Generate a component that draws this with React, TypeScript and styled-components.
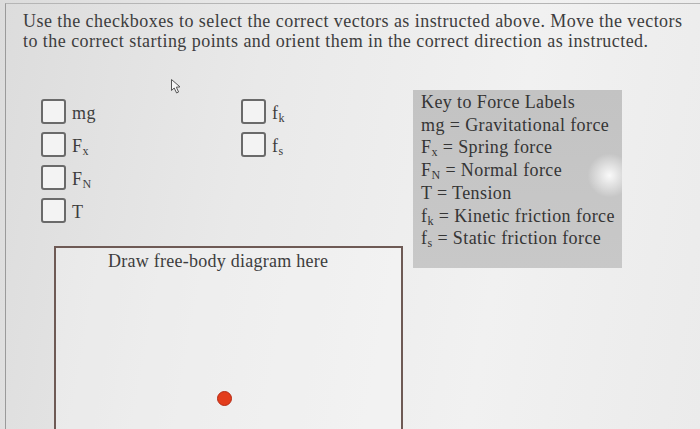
import React from 'react';
import styled, { createGlobalStyle } from 'styled-components';

const GlobalStyle = createGlobalStyle`
  html, body {
    margin: 0;
    padding: 0;
    width: 700px;
    height: 429px;
    overflow: hidden;
  }
  body {
    background: linear-gradient(100deg, #dcdcdc 0%, #e9e9e9 35%, #f1f1f1 70%, #ebebeb 100%);
    font-family: 'Liberation Serif', 'DejaVu Serif', serif;
    color: #3d3d3d;
  }
`;

function Cursor() {
  return (
    <CursorMark>
      <svg width="14" height="17" viewBox="0 0 14 17">
        <path
          d="M1.5 1.5 L1.5 12.5 L4.2 10 L6.6 15 L8.6 14 L6.3 9.2 L10 8.9 Z"
          fill="#f6f6f6"
          stroke="#555"
          strokeWidth="1"
          strokeLinejoin="round"
        />
      </svg>
    </CursorMark>
  );
}

function Option({ children }: { children: React.ReactNode }) {
  return (
    <OptionRow>
      <Box />
      <OptionLabel>{children}</OptionLabel>
    </OptionRow>
  );
}

const KEY_LINES: React.ReactNode[] = [
  'Key to Force Labels',
  <>mg = Gravitational force</>,
  <>F<sub>x</sub> = Spring force</>,
  <>F<sub>N</sub> = Normal force</>,
  <>T = Tension</>,
  <>f<sub>k</sub> = Kinetic friction force</>,
  <>f<sub>s</sub> = Static friction force</>,
];

export default function App() {
  return (
    <>
      <GlobalStyle />
      <Frame>
        <Instructions>
          Use the checkboxes to select the correct vectors as instructed above. Move the vectors
          to the correct starting points and orient them in the correct direction as instructed.
        </Instructions>
        <Workspace>
          <LeftPane>
            <Options>
              <OptionColumn>
                <Option>mg</Option>
                <Option>F<sub>x</sub></Option>
                <Option>F<sub>N</sub></Option>
                <Option>T</Option>
              </OptionColumn>
              <OptionColumn>
                <Option>f<sub>k</sub></Option>
                <Option>f<sub>s</sub></Option>
              </OptionColumn>
              <Cursor />
            </Options>
            <DrawArea>
              <DrawTitle>Draw free-body diagram here</DrawTitle>
              <StartPoint />
            </DrawArea>
          </LeftPane>
          <KeyBox>
            {KEY_LINES.map((line, i) => (
              <KeyLine key={i}>{line}</KeyLine>
            ))}
          </KeyBox>
        </Workspace>
      </Frame>
    </>
  );
}

const Frame = styled.div`
  margin: 3px 0 0 5px;
  height: 440px;
  border-left: 1px solid #9a9a9a;
  border-top: 1px solid #b5b5b5;
  box-sizing: border-box;
`;

const Instructions = styled.p`
  margin: 0;
  padding: 7px 0 0 17px;
  width: 676px;
  font-size: 18px;
  letter-spacing: 0.45px;
  line-height: 20px;
`;

const Workspace = styled.div`
  display: flex;
  margin-top: 39px;
`;

const LeftPane = styled.div`
  width: 406px;
  display: flex;
  flex-direction: column;
`;

const Options = styled.div`
  position: relative;
  display: grid;
  grid-template-columns: 200px auto;
  padding: 9px 0 0 35px;
  height: 156px;
  box-sizing: border-box;
`;

const OptionColumn = styled.div`
  display: flex;
  flex-direction: column;
  gap: 8px;
`;

const OptionRow = styled.div`
  display: flex;
  align-items: center;
  gap: 6px;
  height: 25px;
`;

const Box = styled.span`
  width: 25px;
  height: 25px;
  box-sizing: border-box;
  border: 2px solid #6a6a6a;
  border-radius: 3px;
  background: #f3f3f3;
`;

const OptionLabel = styled.span`
  font-size: 18px;
  line-height: 1;
  margin-top: 2px;
  letter-spacing: 0.4px;

  sub {
    font-size: 12px;
    vertical-align: -3px;
    line-height: 0;
  }
`;

const CursorMark = styled.span`
  position: absolute;
  left: 164px;
  top: -12px;
  line-height: 0;
`;

const DrawArea = styled.div`
  position: relative;
  margin-left: 48px;
  width: 349px;
  height: 200px;
  border: 2px solid #6e5a55;
  box-sizing: border-box;
  background: rgba(250, 250, 250, 0.35);
`;

const DrawTitle = styled.div`
  padding: 3px 0 0 52px;
  font-size: 18px;
  letter-spacing: 0.25px;
  line-height: 20px;
`;

const StartPoint = styled.span`
  position: absolute;
  left: 161px;
  top: 143px;
  width: 13px;
  height: 13px;
  border-radius: 50%;
  background: #e33d1c;
  border: 1px solid #b52a14;
`;

const KeyBox = styled.div`
  margin-left: 1px;
  width: 209px;
  height: 178px;
  box-sizing: border-box;
  padding: 1px 0 0 8px;
  background:
    radial-gradient(circle at 94% 48%, rgba(255, 255, 255, 0.9) 0, rgba(255, 255, 255, 0) 22px),
    linear-gradient(180deg, #c3c3c3 0%, #c8c8c8 100%);
`;

const KeyLine = styled.div`
  font-size: 18px;
  letter-spacing: 0.4px;
  line-height: 22.7px;
  color: #353535;
  white-space: nowrap;

  sub {
    font-size: 12px;
    vertical-align: -3px;
    line-height: 0;
  }
`;
